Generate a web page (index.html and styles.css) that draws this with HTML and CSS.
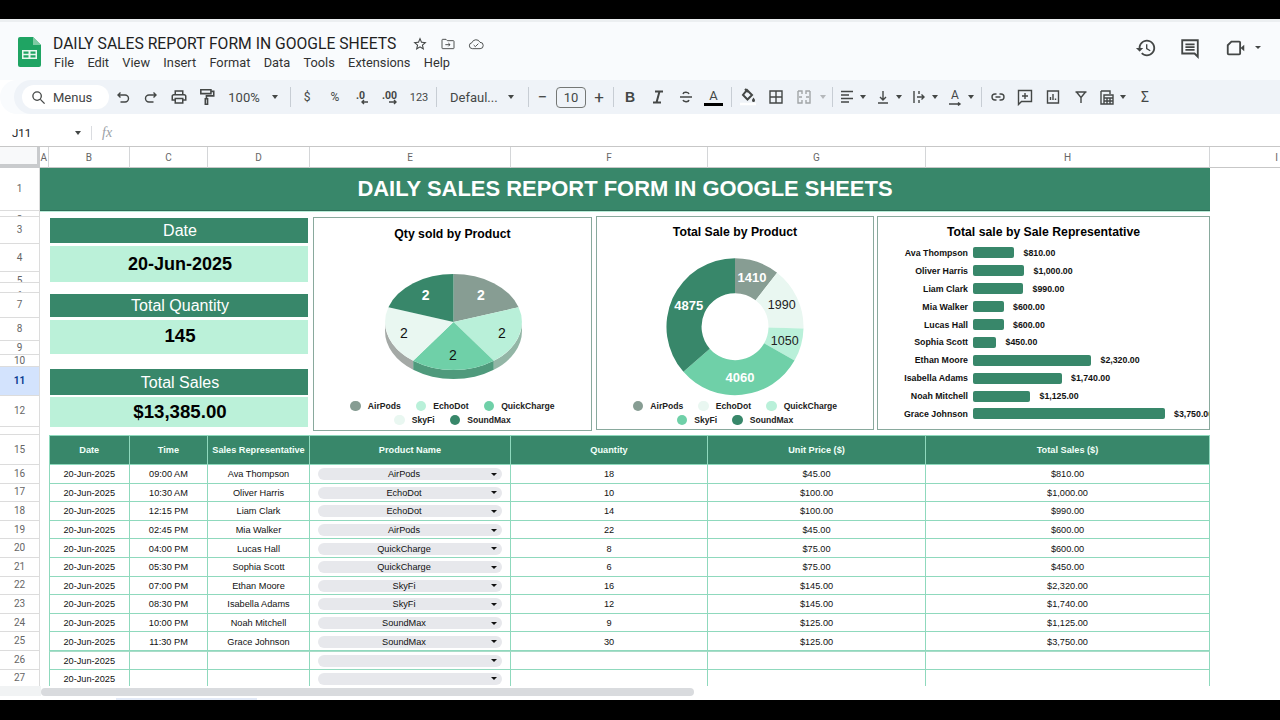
FILE: index.html
```html
<!DOCTYPE html>
<html lang="en">
<head>
<meta charset="utf-8">
<title>DAILY SALES REPORT FORM IN GOOGLE SHEETS</title>
<link rel="stylesheet" href="styles.css">
</head>
<body>
<div class="bar-black top"></div>
<div class="app">
  <header class="head">
    <svg class="logo" viewBox="0 0 23 30"><path d="M2 0h13l8 8v20a2 2 0 0 1-2 2H2a2 2 0 0 1-2-2V2a2 2 0 0 1 2-2z" fill="#1fa463"/><path d="M15 0l8 8h-8z" fill="#7fcba4"/><path d="M4 13h15v9H4z" fill="#e9f7ef"/><path d="M5.5 14.5h5v2.2h-5zM12.500 14.500h5v2.200h-5zM5.500 18.300h5v2.200h-5zM12.500 18.300h5v2.200h-5z" fill="#1fa463"/></svg>
    <div class="doc">
      <div class="doc-top">
        <span class="doc-title">DAILY SALES REPORT FORM IN GOOGLE SHEETS</span>
        <svg class="di first-di" viewBox="0 0 24 24"><path d="M22 9.24l-7.190-.62L12 2 9.190 8.630 2 9.240l5.460 4.730L5.820 21 12 17.270 18.180 21l-1.630-7.030L22 9.240zM12 15.400l-3.760 2.270 1-4.280-3.320-2.880 4.380-.38L12 6.100l1.710 4.040 4.380.38-3.320 2.880 1 4.280L12 15.400z" fill="#444746"/></svg>
        <svg class="di" viewBox="0 0 24 24"><path d="M3 6a1 1 0 0 1 1-1h5l2 2h9a1 1 0 0 1 1 1v10a1 1 0 0 1-1 1H4a1 1 0 0 1-1-1z" class="ln"/><path d="M8 13h7M12.500 10.500 15 13l-2.500 2.500" class="ln"/></svg>
        <svg class="di" viewBox="0 0 24 24"><path d="M6.500 19a4.500 4.500 0 0 1-.6-8.950A6.500 6.500 0 0 1 18 9.500a4.700 4.700 0 0 1 .2 9.500z" class="ln"/><path d="M8.500 13.500l2.500 2.500 4.500-4.500" class="ln"/></svg>
      </div>
      <nav class="menu"><span>File</span><span>Edit</span><span>View</span><span>Insert</span><span>Format</span><span>Data</span><span>Tools</span><span>Extensions</span><span>Help</span></nav>
    </div>
    <div class="head-right">
      <svg class="hi hist" viewBox="0 0 24 24"><path d="M13 3c-4.970 0-9 4.030-9 9H1l3.890 3.890.07.14L9 12H6c0-3.870 3.130-7 7-7s7 3.130 7 7-3.130 7-7 7c-1.930 0-3.680-.79-4.940-2.060l-1.420 1.420C8.270 19.990 10.510 21 13 21c4.970 0 9-4.030 9-9s-4.030-9-9-9zm-1 5v5l4.280 2.540.72-1.210-3.500-2.080V8H12z" fill="#444746"/></svg>
      <svg class="hi cmt" viewBox="0 0 24 24"><path d="M3.500 3.500h17v18l-3.500-3.500H3.500z" class="ln2"/><path d="M7 8h10M7 11h10M7 14h10" class="ln2"/></svg>
      <svg class="hi meet" viewBox="0 0 24 24"><path d="M7 5h8.500a1 1 0 0 1 1 1v12a1 1 0 0 1-1 1H4a1 1 0 0 1-1-1V9z" class="ln2"/><path d="M17 12l4-3.500v7z" fill="#444746"/></svg>
      <span class="caret"></span>
    </div>
  </header>

  <div class="toolbar">
    <div class="search">
      <svg viewBox="0 0 16 16"><circle cx="6.500" cy="6.500" r="4.500" class="ln"/><path d="M10 10l4.500 4.500" class="ln"/></svg>
      <span>Menus</span>
    </div>
    <span class="t t28"><svg class="ti" viewBox="0 0 16 16"><path d="M3 6h7a3.500 3.500 0 0 1 0 7H5.500M5.500 3.500 3 6l2.500 2.500" class="ln"/></svg></span>
    <span class="t t28"><svg class="ti" viewBox="0 0 16 16"><path d="M13 6H6a3.500 3.500 0 0 0 0 7h4.500M10.500 3.500 13 6l-2.500 2.500" class="ln"/></svg></span>
    <span class="t t28"><svg class="ti big" viewBox="0 0 24 24"><path d="M19 8h-1V3H6v5H5c-1.660 0-3 1.340-3 3v6h4v4h12v-4h4v-6c0-1.660-1.340-3-3-3zM8 5h8v3H8V5zm8 12v2H8v-4h8v2zm2-2v-2H6v2H4v-4c0-.55.45-1 1-1h14c.55 0 1 .45 1 1v4h-2z" fill="#444746"/></svg></span>
    <span class="t t27"><svg class="ti big" viewBox="0 0 16 16"><path d="M2.500 1.500h9v3.500h-9zM11.500 3h2.500v4H7.500v2.500M6.500 9.500h2v5h-2z" class="ln"/></svg></span>
    <span class="t zoom">100%</span>
    <span class="t a14"><i class="caret"></i></span>
    <i class="sep s-a"></i>
    <span class="t t28 txt">$</span>
    <span class="t t28 txt">%</span>
    <span class="t t28"><svg class="ti wide" viewBox="0 0 20 16"><text x="3" y="10" class="tk">.0</text><path d="M15 13H9M11 11l-2 2 2 2" class="ln"/></svg></span>
    <span class="t t28"><svg class="ti wide" viewBox="0 0 20 16"><text x="1" y="10" class="tk">.00</text><path d="M8 13h7M13 11l2 2-2 2" class="ln"/></svg></span>
    <span class="t t28 txt small">123</span>
    <i class="sep s-b"></i>
    <span class="t font">Defaul...</span>
    <span class="t a16"><i class="caret"></i></span>
    <i class="sep s-c"></i>
    <span class="t t27 sym">−</span>
    <span class="t fsize">10</span>
    <span class="t t26 sym">+</span>
    <i class="sep s-d"></i>
    <span class="t t28"><b class="bold">B</b></span>
    <span class="t t28"><svg class="ti" viewBox="0 0 16 16"><path d="M5 2.500h8M3 13.500h8M9.500 2.500l-3 11" class="ln2"/></svg></span>
    <span class="t t28"><svg class="ti" viewBox="0 0 16 16"><path d="M2 8h12M11 5c-.5-2-5.500-2.500-6 0M5 11c.5 2 5.500 2.500 6 0" class="ln"/></svg></span>
    <span class="t t27 tc"><span class="ta">A</span><i class="tbar"></i></span>
    <i class="sep s-e"></i>
    <span class="t t28"><svg class="ti big" viewBox="0 0 18 18"><path d="M8 2l5 5-4.500 4.500L4 7zM6 1l3 3" class="ln2"/><path d="M14.500 9.500c1 1.500 1.500 2 1.500 3a1.500 1.500 0 0 1-3 0c0-1 .5-1.500 1.500-3z" fill="#444746"/><path d="M1 16h16" stroke="#fff" stroke-width="2.500"/></svg></span>
    <span class="t t28"><svg class="ti" viewBox="0 0 16 16"><path d="M2 2h12v12H2zM8 2v12M2 8h12" class="ln"/></svg></span>
    <span class="t t28"><svg class="ti off" viewBox="0 0 16 16"><path d="M2 2h4v3M2 2v12h4v-3M14 2h-4v3M14 2v12h-4v-3M3 8h3M13 8h-3" class="ln"/></svg></span>
    <span class="t a10"><i class="caret off-c"></i></span>
    <i class="sep s-f"></i>
    <span class="t t24"><svg class="ti" viewBox="0 0 16 16"><path d="M2 2.500h12M2 6h8M2 9.500h12M2 13h8" class="ln"/></svg></span>
    <span class="t a8 pr"><i class="caret"></i></span>
    <span class="t t24"><svg class="ti" viewBox="0 0 16 16"><path d="M8 2v8.500M5 8l3 3 3-3M3 14h10" class="ln"/></svg></span>
    <span class="t a8 pr"><i class="caret"></i></span>
    <span class="t t24"><svg class="ti" viewBox="0 0 16 16"><path d="M3 2v12M6 8h7M10.500 5.500 13 8l-2.500 2.500M8 2v3M8 11v3" class="ln"/></svg></span>
    <span class="t a8 pr"><i class="caret"></i></span>
    <span class="t t24 tc"><span class="ta thin">A</span><svg class="uarrow" viewBox="0 0 14 4"><path d="M1 2h11M10 .5 12 2l-2 1.500" class="ln"/></svg></span>
    <span class="t a8"><i class="caret"></i></span>
    <i class="sep s-g"></i>
    <span class="t t27"><svg class="ti" viewBox="0 0 16 16"><path d="M6.500 5H5a3 3 0 0 0 0 6h1.500M9.500 5H11a3 3 0 0 1 0 6H9.500M5.500 8h5" class="ln"/></svg></span>
    <span class="t t28"><svg class="ti big" viewBox="0 0 18 18"><path d="M2.500 2.500h13v11H5.500l-3 3zM9 5v6M6 8h6" class="ln"/></svg></span>
    <span class="t t28"><svg class="ti" viewBox="0 0 16 16"><path d="M2.500 2h11v12h-11zM5.500 11V8M8 11V5M10.500 11V9.500" class="ln"/></svg></span>
    <span class="t t28"><svg class="ti" viewBox="0 0 16 16"><path d="M2.500 3h11M3.500 3 8 8.500V14M12.500 3 8 8.500" class="ln"/></svg></span>
    <span class="t t24"><svg class="ti big" viewBox="0 0 18 18"><path d="M3 3v13h12M3 3h9v3M6 7h9v9H6zM6 10h9M6 13h9M9 10v6M12 10v6" class="ln"/></svg></span>
    <span class="t a8"><i class="caret"></i></span>
    <span class="t sigma">Σ</span>
  </div>

  <div class="formula">
    <span class="cellref">J11</span>
    <i class="caret"></i>
    <i class="fsep"></i>
    <span class="fx">fx</span>
  </div>

  <main class="sheet">
    <div class="grid">
      <div class="corner"></div>
      <div class="ch">A</div><div class="ch">B</div><div class="ch">C</div><div class="ch">D</div><div class="ch">E</div><div class="ch">F</div><div class="ch">G</div><div class="ch">H</div><div class="ch ch-i">I</div>

      <div class="rh">1</div><div class="banner">DAILY SALES REPORT FORM IN GOOGLE SHEETS</div>
      <div class="rh rh-low p3">2</div>
      <div class="rh">3</div><div class="kh kh-date">Date</div>
      <div class="rh">4</div><div class="kv kv-date">20-Jun-2025</div>
      <div class="rh rh-low p3">5</div>
      <div class="rh rh-low p7">6</div>
      <div class="rh">7</div><div class="kh kh-qty">Total Quantity</div>
      <div class="rh">8</div><div class="kv kv-qty">145</div>
      <div class="rh">9</div>
      <div class="rh">10</div>
      <div class="rh rh-sel">11</div><div class="kh kh-sales">Total Sales</div>
      <div class="rh">12</div><div class="kv kv-sales">$13,385.00</div>
      <div class="rh rh-low p7">13</div>
      <div class="rh rh-low p2">14</div>

      <div class="rh">15</div><div class="th th-first">Date</div><div class="th">Time</div><div class="th">Sales Representative</div><div class="th">Product Name</div><div class="th">Quantity</div><div class="th">Unit Price ($)</div><div class="th">Total Sales ($)</div>

      <div class="rh">16</div><div class="td td-first">20-Jun-2025</div><div class="td">09:00 AM</div><div class="td">Ava Thompson</div><div class="td"><div class="chip"><span>AirPods</span><i class="caret dark"></i></div></div><div class="td">18</div><div class="td">$45.00</div><div class="td">$810.00</div>
      <div class="rh">17</div><div class="td td-first">20-Jun-2025</div><div class="td">10:30 AM</div><div class="td">Oliver Harris</div><div class="td"><div class="chip"><span>EchoDot</span><i class="caret dark"></i></div></div><div class="td">10</div><div class="td">$100.00</div><div class="td">$1,000.00</div>
      <div class="rh">18</div><div class="td td-first">20-Jun-2025</div><div class="td">12:15 PM</div><div class="td">Liam Clark</div><div class="td"><div class="chip"><span>EchoDot</span><i class="caret dark"></i></div></div><div class="td">14</div><div class="td">$100.00</div><div class="td">$990.00</div>
      <div class="rh">19</div><div class="td td-first">20-Jun-2025</div><div class="td">02:45 PM</div><div class="td">Mia Walker</div><div class="td"><div class="chip"><span>AirPods</span><i class="caret dark"></i></div></div><div class="td">22</div><div class="td">$45.00</div><div class="td">$600.00</div>
      <div class="rh">20</div><div class="td td-first">20-Jun-2025</div><div class="td">04:00 PM</div><div class="td">Lucas Hall</div><div class="td"><div class="chip"><span>QuickCharge</span><i class="caret dark"></i></div></div><div class="td">8</div><div class="td">$75.00</div><div class="td">$600.00</div>
      <div class="rh">21</div><div class="td td-first">20-Jun-2025</div><div class="td">05:30 PM</div><div class="td">Sophia Scott</div><div class="td"><div class="chip"><span>QuickCharge</span><i class="caret dark"></i></div></div><div class="td">6</div><div class="td">$75.00</div><div class="td">$450.00</div>
      <div class="rh">22</div><div class="td td-first">20-Jun-2025</div><div class="td">07:00 PM</div><div class="td">Ethan Moore</div><div class="td"><div class="chip"><span>SkyFi</span><i class="caret dark"></i></div></div><div class="td">16</div><div class="td">$145.00</div><div class="td">$2,320.00</div>
      <div class="rh">23</div><div class="td td-first">20-Jun-2025</div><div class="td">08:30 PM</div><div class="td">Isabella Adams</div><div class="td"><div class="chip"><span>SkyFi</span><i class="caret dark"></i></div></div><div class="td">12</div><div class="td">$145.00</div><div class="td">$1,740.00</div>
      <div class="rh">24</div><div class="td td-first">20-Jun-2025</div><div class="td">10:00 PM</div><div class="td">Noah Mitchell</div><div class="td"><div class="chip"><span>SoundMax</span><i class="caret dark"></i></div></div><div class="td">9</div><div class="td">$125.00</div><div class="td">$1,125.00</div>
      <div class="rh">25</div><div class="td td-first">20-Jun-2025</div><div class="td">11:30 PM</div><div class="td">Grace Johnson</div><div class="td"><div class="chip"><span>SoundMax</span><i class="caret dark"></i></div></div><div class="td">30</div><div class="td">$125.00</div><div class="td">$3,750.00</div>
      <div class="rh">26</div><div class="td td-first tl">20-Jun-2025</div><div class="td tl"></div><div class="td tl"></div><div class="td tl"><div class="chip"><span></span><i class="caret dark"></i></div></div><div class="td tl"></div><div class="td tl"></div><div class="td tl"></div>
      <div class="rh">27</div><div class="td td-first">20-Jun-2025</div><div class="td"></div><div class="td"></div><div class="td"><div class="chip"><span></span><i class="caret dark"></i></div></div><div class="td"></div><div class="td"></div><div class="td"></div>
    </div>

    <section class="card card-pie">
      <h2 class="ct ct-pie">Qty sold by Product</h2>
      <svg class="pie" viewBox="372 268 160 120">
        <path d="M384 322A68.500 48 0 0 0 412.200 360.800V369.800A68.500 48 0 0 1 384 331Z" fill="#a4a9a6"/>
        <path d="M412.200 360.800A68.500 48 0 0 0 492.800 360.800V369.800A68.500 48 0 0 1 412.200 369.800Z" fill="#4f9a7c"/>
        <path d="M492.800 360.800A68.500 48 0 0 0 521 322V331A68.500 48 0 0 1 492.800 369.800Z" fill="#93b6a6"/>
        <path d="M452.500 322L452.500 274A68.500 48 0 0 1 517.600 307.200Z" fill="#879d93"/>
        <path d="M452.500 322L517.600 307.200A68.500 48 0 0 1 492.800 360.800Z" fill="#b9f0d9"/>
        <path d="M452.500 322L492.800 360.800A68.500 48 0 0 1 412.200 360.800Z" fill="#6fd0a8"/>
        <path d="M452.500 322L412.200 360.800A68.500 48 0 0 1 387.400 307.200Z" fill="#e9f7f1"/>
        <path d="M452.500 322L387.400 307.200A68.500 48 0 0 1 452.500 274Z" fill="#38876a"/>
        <text x="424.700" y="299.500" class="lw">2</text>
        <text x="480" y="299.500" class="lw">2</text>
        <text x="501" y="337.500" class="ld">2</text>
        <text x="452" y="360" class="ld">2</text>
        <text x="403" y="337.500" class="ld">2</text>
      </svg>
      <div class="legend lg-pie">
        <div class="lr"><span class="li"><i class="dot c1"></i>AirPods</span><span class="li"><i class="dot c2"></i>EchoDot</span><span class="li"><i class="dot c3"></i>QuickCharge</span></div>
        <div class="lr"><span class="li"><i class="dot c4"></i>SkyFi</span><span class="li"><i class="dot c5"></i>SoundMax</span></div>
      </div>
    </section>

    <section class="card card-donut">
      <h2 class="ct">Total Sale by Product</h2>
      <svg class="donut" viewBox="655 250 160 149">
        <path d="M735 258.200A68.500 68.500 0 0 1 777.100 272.700L755.600 300.300A33.500 33.500 0 0 0 735 293.200Z" fill="#879d93"/>
        <path d="M777.100 272.700A68.500 68.500 0 0 1 803.500 328.400L768.500 327.500A33.500 33.500 0 0 0 755.600 300.300Z" fill="#e9f7f1"/>
        <path d="M803.500 328.400A68.500 68.500 0 0 1 794.500 360.600L764.100 343.300A33.500 33.500 0 0 0 768.500 327.500Z" fill="#b9f0d9"/>
        <path d="M794.500 360.600A68.500 68.500 0 0 1 683.400 371.800L709.800 348.700A33.500 33.500 0 0 0 764.100 343.300Z" fill="#6fd0a8"/>
        <path d="M683.400 371.800A68.500 68.500 0 0 1 735 258.200L735 293.200A33.500 33.500 0 0 0 709.800 348.700Z" fill="#38876a"/>
        <text x="752" y="282" class="nw">1410</text>
        <text x="781.700" y="308.500" class="nd">1990</text>
        <text x="784.700" y="344.500" class="nd">1050</text>
        <text x="740" y="381.500" class="nw">4060</text>
        <text x="688.700" y="309.500" class="nw">4875</text>
      </svg>
      <div class="legend">
        <div class="lr"><span class="li"><i class="dot c1"></i>AirPods</span><span class="li"><i class="dot c4"></i>EchoDot</span><span class="li"><i class="dot c2"></i>QuickCharge</span></div>
        <div class="lr"><span class="li"><i class="dot c3"></i>SkyFi</span><span class="li"><i class="dot c5"></i>SoundMax</span></div>
      </div>
    </section>

    <section class="card card-bars">
      <h2 class="ct">Total sale by Sale Representative</h2>
      <div class="bars">
        <div class="br"><span class="bn">Ava Thompson</span><i class="bb" style="width:41px"></i><span class="bv">$810.00</span></div>
        <div class="br"><span class="bn">Oliver Harris</span><i class="bb" style="width:51px"></i><span class="bv">$1,000.00</span></div>
        <div class="br"><span class="bn">Liam Clark</span><i class="bb" style="width:50px"></i><span class="bv">$990.00</span></div>
        <div class="br"><span class="bn">Mia Walker</span><i class="bb" style="width:30.500px"></i><span class="bv">$600.00</span></div>
        <div class="br"><span class="bn">Lucas Hall</span><i class="bb" style="width:30.500px"></i><span class="bv">$600.00</span></div>
        <div class="br"><span class="bn">Sophia Scott</span><i class="bb" style="width:23px"></i><span class="bv">$450.00</span></div>
        <div class="br"><span class="bn">Ethan Moore</span><i class="bb" style="width:118px"></i><span class="bv">$2,320.00</span></div>
        <div class="br"><span class="bn">Isabella Adams</span><i class="bb" style="width:88.500px"></i><span class="bv">$1,740.00</span></div>
        <div class="br"><span class="bn">Noah Mitchell</span><i class="bb" style="width:57px"></i><span class="bv">$1,125.00</span></div>
        <div class="br"><span class="bn">Grace Johnson</span><i class="bb" style="width:191.500px"></i><span class="bv">$3,750.00</span></div>
      </div>
    </section>
  </main>

  <footer class="foot">
    <div class="foot-left"></div>
    <div class="foot-main"><div class="thumb"></div><div class="tabline"></div></div>
  </footer>
</div>
<div class="bar-black bottom"></div>
</body>
</html>
```
FILE: styles.css
```css
*{box-sizing:border-box}
html,body{margin:0;padding:0}
body{width:1280px;height:720px;overflow:hidden;background:#000;display:flex;flex-direction:column;font-family:Roboto,"Liberation Sans",sans-serif;color:#202124}
.bar-black{background:#000;flex:none}
.top{height:19px}
.bottom{height:20px}
.app{height:681px;flex:none;display:flex;flex-direction:column;background:#fff;border-top:3px solid #eceff1}
i{display:block;font-style:normal}

.head{height:58px;flex:none;background:#f9fbfd;display:flex;position:relative}
.logo{width:23px;height:30px;margin:15px 0 0 18px;flex:none}
.doc{margin:10px 0 0 12px}
.doc-top{display:flex;align-items:center;height:24px}
.doc-title{font-size:15.700px;color:#1f1f1f;line-height:24px;white-space:nowrap}
.di{width:16px;height:16px;margin-left:12px}
.first-di{margin-left:16px}
.ln{fill:none;stroke:#444746;stroke-width:1.400}
.ln2{fill:none;stroke:#444746;stroke-width:2}
.menu{display:flex;gap:13.300px;font-size:12.800px;color:#333;margin-top:-2px;line-height:18px;padding-left:1px}
.head-right{margin-left:auto;display:flex;align-items:center;height:52px;padding-right:19px}
.hi{width:22px;height:22px}
.cmt{margin-left:21.500px}
.meet{margin-left:24.500px}
.head-right .caret{margin-left:8px;margin-bottom:2px;border-top-width:3px;border-left-width:3px;border-right-width:3px}

.caret{width:0;height:0;border-left:3.500px solid transparent;border-right:3.500px solid transparent;border-top:4px solid #444746;display:block;flex:none}
.off-c{border-top-color:#b5b8bb}

.toolbar{height:34px;flex:none;background:#eff3f8;margin-left:14px;border-radius:17px 0 0 17px;padding-left:8px;display:flex;align-items:center;box-shadow:-14px 0 0 #f9fbfd}
.search{width:87px;height:24px;background:#fff;border-radius:12px;display:flex;align-items:center;padding-left:9px;font-size:13px;color:#444;flex:none}
.search svg{width:15px;height:15px;margin-right:7px}
.t{display:flex;align-items:center;justify-content:center;flex:none;height:24px;color:#444746}
.t24{width:24px}.t26{width:26px}.t27{width:27px}.t28{width:28px}
.a8{width:8px}.a10{width:10px}.a14{width:14px}.a16{width:16px}
.pr{margin-right:4px}
.ti{width:16px;height:16px}
.big{width:18px;height:18px}
.wide{width:20px;height:16px}
.off{opacity:.45}
.zoom{width:48px;font-size:13px}
.font{width:58px;font-size:13px;justify-content:flex-start;padding-left:5px}
.txt{font-size:12px}
.small{font-size:11px}
.tk{font-size:10.500px;font-weight:700;fill:#444746;font-family:Roboto,sans-serif}
.sym{font-size:17px}
.fsize{width:30px;height:21px;border:1px solid #747775;border-radius:4px;font-size:13px;background:transparent}
.bold{font-family:"Liberation Sans",sans-serif;font-size:14px;color:#444746}
.tc{flex-direction:column;position:relative}
.ta{font-size:13px;line-height:13px;color:#444746}
.thin{font-size:12px}
.tbar{width:19px;height:3px;background:#000;margin-top:1px}
.uarrow{width:14px;height:4px}
.sigma{width:24px;margin-left:6px;font-size:14px}
.sep{width:1px;height:20px;background:#c7cdd4;flex:none}
.s-a{margin:0 2px 0 8px}
.s-b{margin:0 8px 0 3px}
.s-c{margin:0 0 0 9px}
.s-d{margin:0 2px 0 1px}
.s-e{margin:0 2px 0 4px}
.s-f{margin:0 2px 0 4px}
.s-g{margin:0 2px 0 6px}

.formula{height:33px;flex:none;background:#fff;display:flex;align-items:center;border-bottom:1px solid #c7c7c7;padding:6px 0 0 12px}
.cellref{font-size:11.500px;color:#202124;width:63px}
.formula .caret{border-left-width:3.500px;border-right-width:3.500px}
.fsep{width:1px;height:14px;background:#dadce0;margin-left:10px}
.fx{font-family:"Liberation Serif",serif;font-style:italic;font-size:14px;color:#9aa0a6;margin-left:10px}

.sheet{flex:1;min-height:0;position:relative;overflow:hidden;background:#fff}
.grid{display:grid;grid-template-columns:40px 8.500px 81.500px 78px 102px 201px 197px 218px 284px 70px;grid-template-rows:21px 43px 6px 27px 28px 11px 10px 25px 23px 14px 12px 29px 31px 4px 4px 30px;grid-auto-rows:18.600px;font-family:"Liberation Sans",Arial,sans-serif}
.corner{background:#f8f9fa;border-right:3px solid #c9cbcd;border-bottom:4px solid #c9cbcd}
.ch{display:flex;align-items:center;justify-content:center;font-family:Roboto,sans-serif;font-size:10px;color:#666;border-right:1px solid #d4d6d8;border-bottom:1px solid #c7c7c7;background:#fff}
.ch-i{justify-content:flex-end;padding-right:2px;border-right:0}
.rh{grid-column:1;display:flex;align-items:center;justify-content:center;overflow:hidden;font-family:Roboto,sans-serif;font-size:10px;line-height:12px;color:#666;background:#fff;border-right:1px solid #dcdcdc;border-bottom:1px solid #dcdcdc}
.rh-low{align-items:flex-start}
.p2{padding-top:2px}.p3{padding-top:3px}.p7{padding-top:7px}
.rh-sel{background:#d3e3fd;color:#0b3d91;font-weight:700}
.banner{grid-column:2/10;display:flex;align-items:center;justify-content:center;background:#38876a;color:#fff;font-weight:700;font-size:21.950px;border-bottom:1px solid #2f6f58;box-shadow:0 1px 0 #b9ecd8}
.kh,.kv{grid-column:3/6;margin:0 2px 0 1.500px;padding-left:2px;display:flex;align-items:center;justify-content:center}
.kh{background:#38876a;color:#fff;font-size:16px}
.kv{background:#bbf1d9;color:#000;font-weight:700;font-size:18.670px}
.kh-date{margin-top:1px;margin-bottom:1px}
.kv-date{grid-row:span 2;margin-top:2px;margin-bottom:1px;font-size:18px}
.kh-qty{margin-top:1px;margin-bottom:1px;padding-top:1px}
.kv-qty{grid-row:span 2;margin-top:2px;margin-bottom:1.500px;padding-bottom:1px}
.kh-sales{margin-top:2px;margin-bottom:1px;padding-top:1px}
.kv-sales{margin-top:1px}
.th,.td{display:flex;align-items:center;justify-content:center;border-right:1px solid #8fd9bd;border-bottom:1px solid #8fd9bd;white-space:nowrap;overflow:hidden;font-size:9.200px}
.th{background:#38876a;color:#f2fff9;font-weight:700;border-top:1px solid #8fd9bd}
.td{background:#fff;color:#111;padding-top:1px}
.tl{border-top:1px solid #a9dcc8}
.th-first,.td-first{grid-column:3;border-left:1px solid #8fd9bd}
.chip{width:184px;height:12px;margin-left:-1px;background:#e7e8ec;border-radius:6px;display:flex;align-items:center;padding-right:5px}
.chip span{flex:1;text-align:center}
.caret.dark{border-top-color:#111;border-left-width:3px;border-right-width:3px;border-top-width:3.500px}

.card{position:absolute;background:#fff;border:1.500px solid #89a99d;overflow:hidden;font-family:"Liberation Sans",Arial,sans-serif;display:flex;flex-direction:column;align-items:center}
.card-pie{left:313px;top:70px;width:279px;height:214px}
.card-donut{left:596px;top:69px;width:278px;height:214px}
.card-bars{left:877px;top:69px;width:333px;height:214px}
.ct{margin:8px 0 0;font-size:12.250px;line-height:14px;font-weight:700;color:#000;white-space:nowrap}
.ct-pie{margin-top:9px}
.pie{width:160px;height:120px;margin-top:27px;flex:none}
.donut{width:160px;height:149px;margin-top:11px;flex:none}
.legend{display:flex;flex-direction:column;align-items:center;font-size:8.600px;font-weight:700;color:#222}
.lg-pie{margin-top:11px}
.lr{display:flex;gap:15px;height:14px;align-items:center}
.li{display:flex;align-items:center;gap:7px}
.dot{width:10.500px;height:10.500px;border-radius:50%}
.c1{background:#879d93}.c2{background:#b9f0d9}.c3{background:#6fd0a8}.c4{background:#e9f7f1}.c5{background:#38876a}
.lw{font:700 14px "Liberation Sans",sans-serif;fill:#fff;text-anchor:middle}
.ld{font:400 14px "Liberation Sans",sans-serif;fill:#111;text-anchor:middle}
.nw{font:700 13px "Liberation Sans",sans-serif;fill:#fff;text-anchor:middle}
.nd{font:400 12.500px "Liberation Sans",sans-serif;fill:#222;text-anchor:middle}
.bars{width:100%;margin-top:5px;display:flex;flex-direction:column}
.br{height:17.900px;display:flex;align-items:center;font-size:8.800px;font-weight:700;color:#111;white-space:nowrap;flex:none}
.bn{width:90px;text-align:right;margin-right:5px;flex:none}
.bb{height:11px;background:#38876a;border-radius:2px;flex:none}
.bv{margin-left:9.500px;flex:none}

.foot{height:14px;flex:none;display:flex;background:#fff}
.foot-left{width:41px;background:#f1f3f4;height:10px}
.foot-main{flex:1;padding-top:1.500px}
.thumb{width:653px;height:8px;background:#d9dbde;border-radius:4px}
.tabline{width:141px;height:2px;margin:2.500px 0 0 75px;background:#e3eaf7}
```
